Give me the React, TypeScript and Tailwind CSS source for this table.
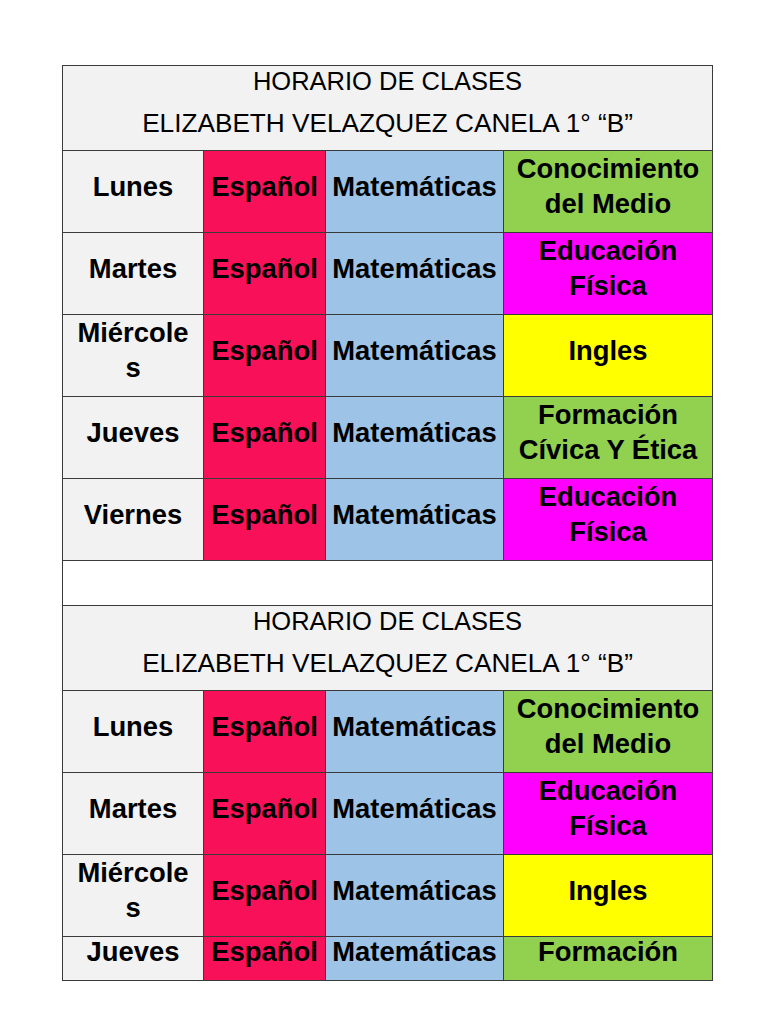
import React from 'react'

type Row = {
  day: React.ReactNode
  last: React.ReactNode
  lastBg: string
}

const rows: Row[] = [
  { day: 'Lunes', last: <>Conocimiento<br />del Medio</>, lastBg: 'bg-[#92d050]' },
  { day: 'Martes', last: <>Educación<br />Física</>, lastBg: 'bg-[#ff00ff]' },
  { day: <>Miércole<br />s</>, last: 'Ingles', lastBg: 'bg-[#ffff00]' },
  { day: 'Jueves', last: <>Formación<br />Cívica Y Ética</>, lastBg: 'bg-[#92d050]' },
  { day: 'Viernes', last: <>Educación<br />Física</>, lastBg: 'bg-[#ff00ff]' },
]

const cell = 'border border-[#3a3a3a] p-0 text-center align-middle font-bold text-[27.4px] text-black'

function Header() {
  return (
    <tr>
      <td colSpan={4} className="h-[85px] border border-[#3a3a3a] bg-[#f2f2f2] p-0 align-top text-center leading-[30px] text-black">
        <p className="text-[25.5px]">HORARIO DE CLASES</p>
        <p className="mt-[12px] text-[26.2px]">ELIZABETH VELAZQUEZ CANELA 1° “B”</p>
      </td>
    </tr>
  )
}

function DayRow({ row, short }: { row: Row; short?: boolean }) {
  const h = short ? 'h-[44px] align-top leading-[29px]' : 'h-[82px] pb-[11px] leading-[35px]'
  return (
    <tr>
      <td className={`${cell} ${h} bg-[#f2f2f2]`}>{row.day}</td>
      <td className={`${cell} ${h} bg-[#f81158]`}>Español</td>
      <td className={`${cell} ${h} bg-[#9dc3e6]`}>Matemáticas</td>
      <td className={`${cell} ${h} ${row.lastBg}`}>{row.last}</td>
    </tr>
  )
}

export default function App() {
  return (
    <div className="min-h-[1024px] w-[768px] bg-white pt-[65px] pl-[62px]" style={{ fontFamily: '"Liberation Sans", Arial, sans-serif' }}>
      <table className="w-[650px] table-fixed border-collapse">
        <colgroup>
          <col className="w-[141px]" />
          <col className="w-[122px]" />
          <col className="w-[178px]" />
          <col className="w-[209px]" />
        </colgroup>
        <tbody>
          <Header />
          {rows.map((r, i) => (
            <DayRow key={i} row={r} />
          ))}
          <tr>
            <td colSpan={4} className="h-[45px] border border-[#3a3a3a] bg-white p-0" />
          </tr>
          <Header />
          {rows.slice(0, 3).map((r, i) => (
            <DayRow key={'b' + i} row={r} />
          ))}
          <DayRow row={{ day: 'Jueves', last: 'Formación', lastBg: 'bg-[#92d050]' }} short />
        </tbody>
      </table>
    </div>
  )
}
